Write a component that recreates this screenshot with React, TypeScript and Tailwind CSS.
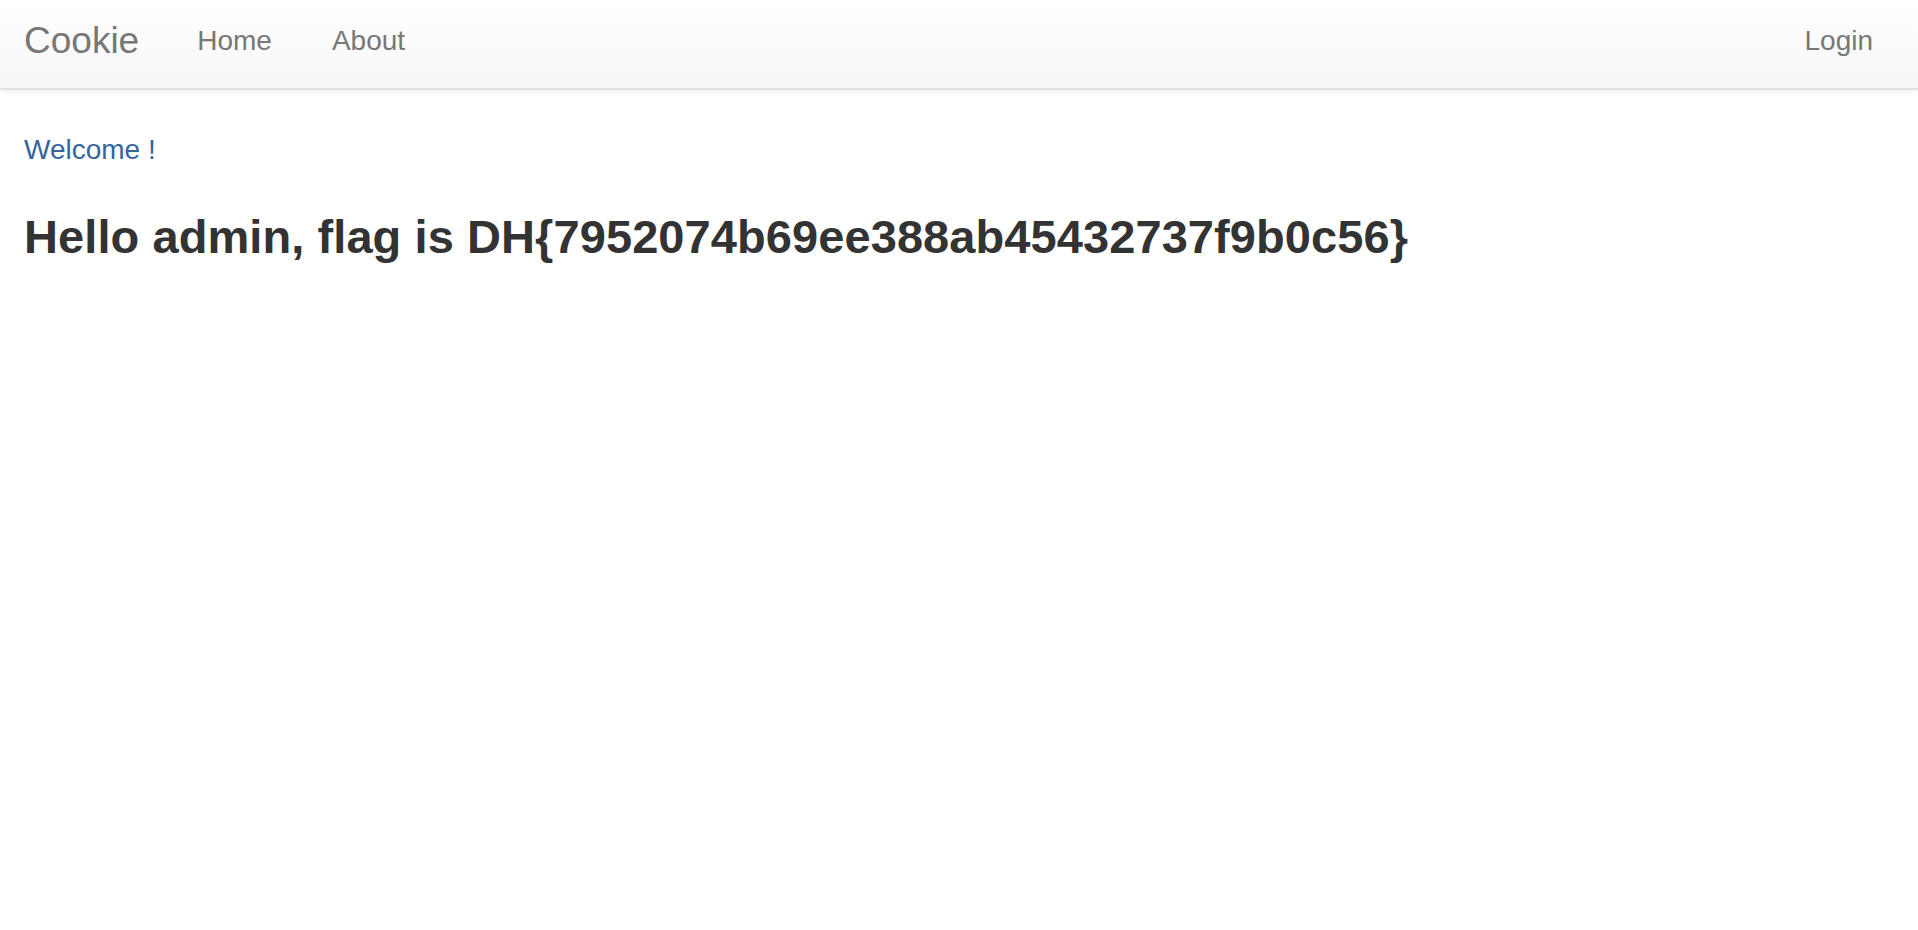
import React from 'react';

const font = { fontFamily: '"Liberation Sans", Arial, Helvetica, sans-serif' };

export default function App() {
  return (
    <div className="min-h-screen bg-white" style={font}>
      {/* Navbar */}
      <nav className="flex h-[90px] items-center border-b-2 border-[#e2e2e2] bg-gradient-to-b from-white to-[#f7f7f7] pb-[7px] shadow-[0_2px_8px_rgba(0,0,0,0.06)]">
        <a className="pl-[24px] pr-[28px] text-[37px] leading-none text-[#777]">Cookie</a>
        <a className="px-[30px] text-[28px] leading-none text-[#777]">Home</a>
        <a className="px-[30px] text-[28px] leading-none text-[#777]">About</a>
        <a className="ml-auto pr-[45px] text-[28px] leading-none text-[#777]">Login</a>
      </nav>

      {/* Content */}
      <div className="px-[24px]">
        <p className="mt-[40px] text-[28px] leading-[40px] text-[#36659d]">Welcome !</p>
        <h3 className="mt-[41px] text-[47px] font-bold leading-[1.1] tracking-[0.08px] text-[#333]">
          Hello admin, flag is DH{'{'}7952074b69ee388ab45432737f9b0c56{'}'}
        </h3>
      </div>
    </div>
  );
}
